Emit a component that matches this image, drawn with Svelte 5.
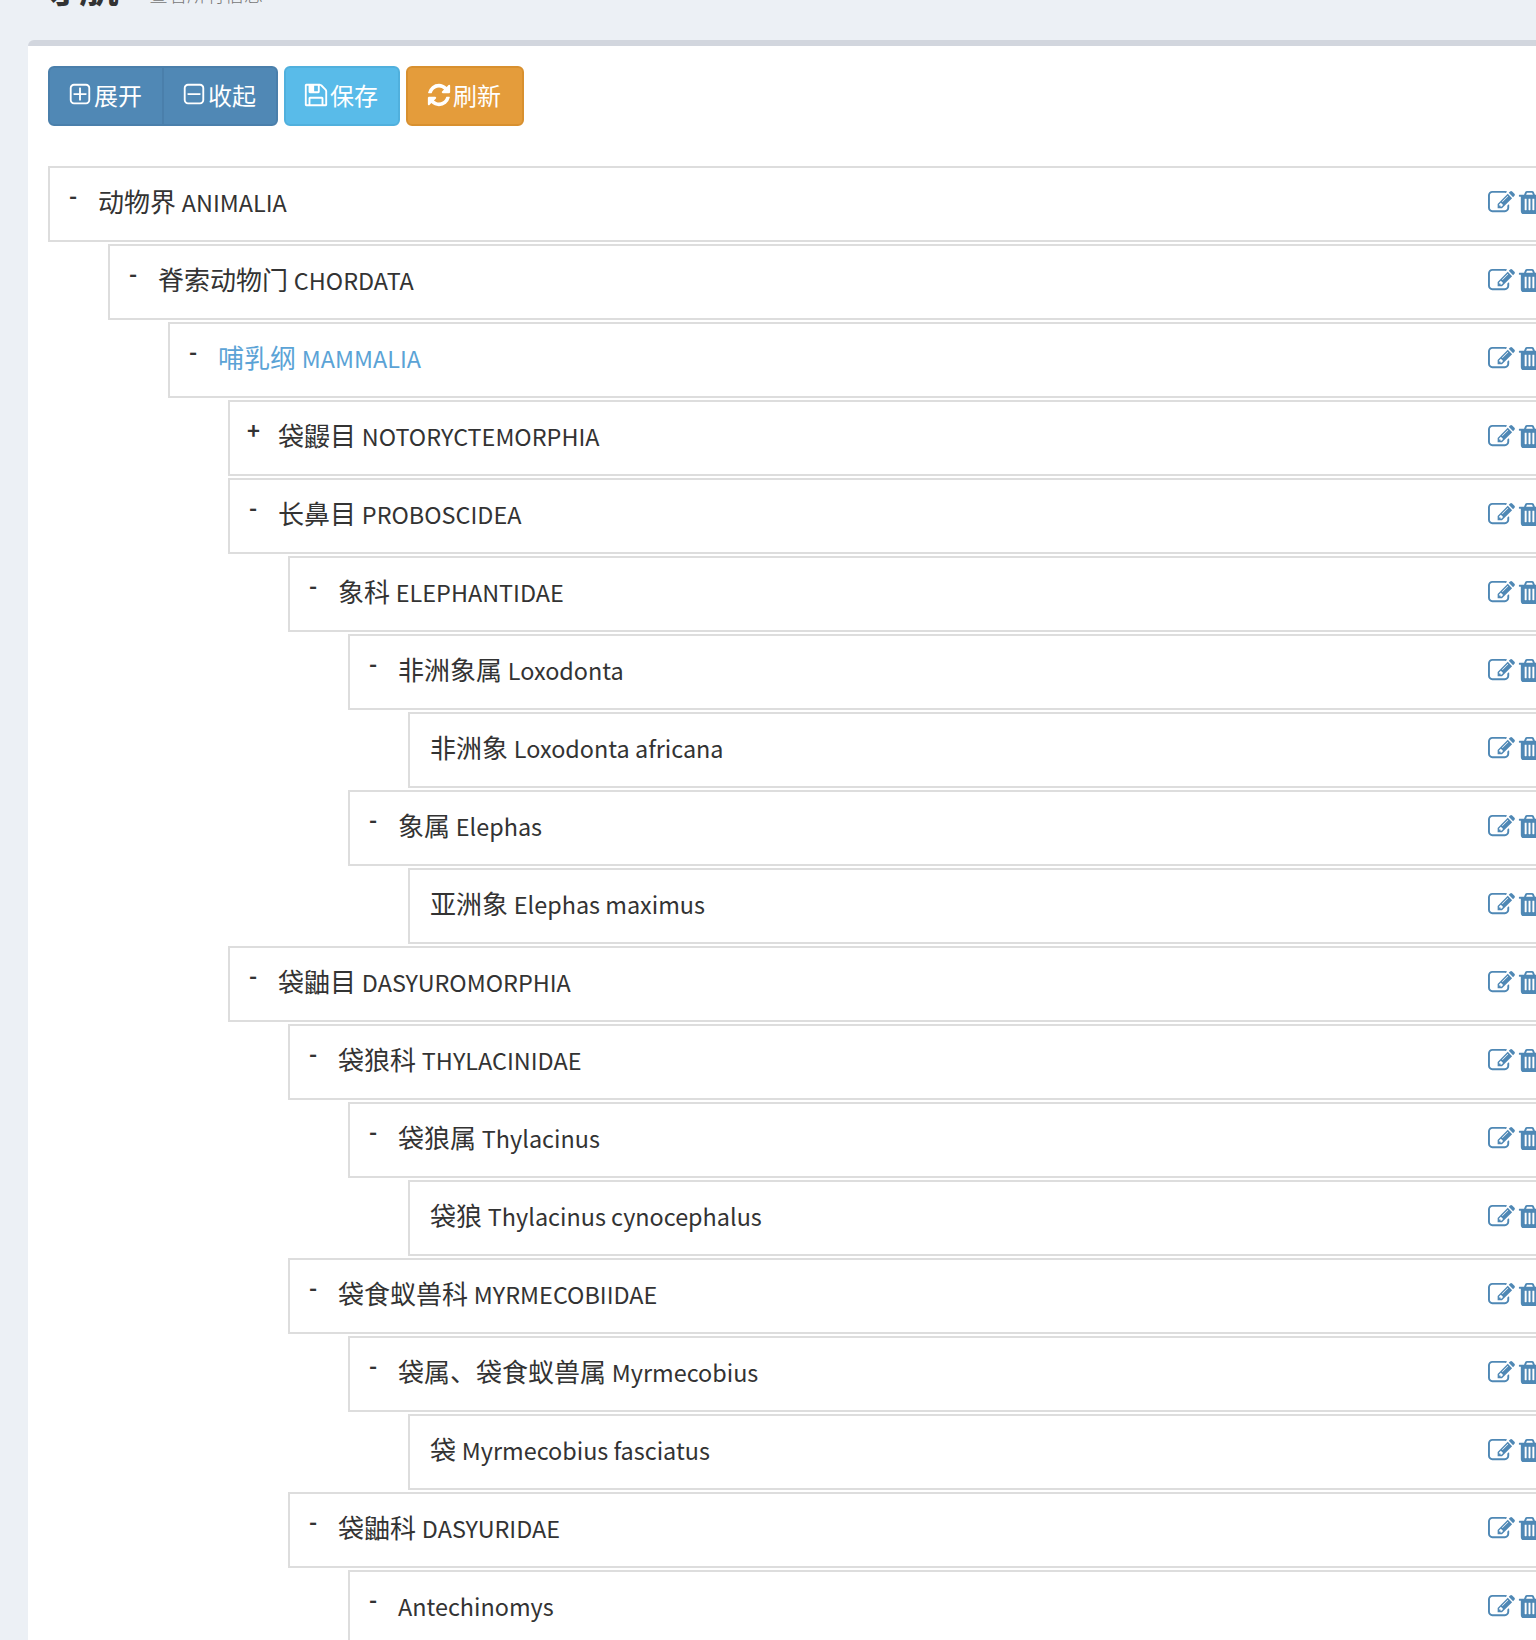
<script>
  const tree = [
    { name: '动物界', latin: 'ANIMALIA', open: true, children: [
      { name: '脊索动物门', latin: 'CHORDATA', open: true, children: [
        { name: '哺乳纲', latin: 'MAMMALIA', open: true, active: true, children: [
          { name: '袋鼹目', latin: 'NOTORYCTEMORPHIA', open: false, children: [] },
          { name: '长鼻目', latin: 'PROBOSCIDEA', open: true, children: [
            { name: '象科', latin: 'ELEPHANTIDAE', open: true, children: [
              { name: '非洲象属', latin: 'Loxodonta', open: true, children: [
                { name: '非洲象', latin: 'Loxodonta africana', leaf: true }
              ] },
              { name: '象属', latin: 'Elephas', open: true, children: [
                { name: '亚洲象', latin: 'Elephas maximus', leaf: true }
              ] }
            ] }
          ] },
          { name: '袋鼬目', latin: 'DASYUROMORPHIA', open: true, children: [
            { name: '袋狼科', latin: 'THYLACINIDAE', open: true, children: [
              { name: '袋狼属', latin: 'Thylacinus', open: true, children: [
                { name: '袋狼', latin: 'Thylacinus cynocephalus', leaf: true }
              ] }
            ] },
            { name: '袋食蚁兽科', latin: 'MYRMECOBIIDAE', open: true, children: [
              { name: '袋属、袋食蚁兽属', latin: 'Myrmecobius', open: true, children: [
                { name: '袋', latin: 'Myrmecobius fasciatus', leaf: true }
              ] }
            ] },
            { name: '袋鼬科', latin: 'DASYURIDAE', open: true, children: [
              { name: '', latin: 'Antechinomys', open: true, children: [] }
            ] }
          ] }
        ] }
      ] }
    ] }
  ];
</script>

{#snippet nodes(items)}
  <ol class="list">
    {#each items as item}
      <li>
        <div class="row">
          {#if !item.leaf}
            <span class="toggle" class:plus={!item.open}>{item.open ? '-' : '+'}</span>
          {/if}
          <span class="name" class:active={item.active}>{item.name}{#if item.name}{' '}{/if}<span class="latin">{item.latin}</span></span>
          <span class="actions">
            <svg class="ic-edit" viewBox="0 0 1792 1792"><path d="M888 1184l116-116-152-152-116 116v56h96v96h56zm440-720q-16-16-33 1l-350 350q-17 17-1 33t33-1l350-350q17-17 1-33zm80 594v190q0 119-84.500 203.500t-203.500 84.500h-832q-119 0-203.500-84.500t-84.500-203.500v-832q0-119 84.500-203.500t203.500-84.500h832q63 0 117 25 15 7 18 23 3 17-9 29l-49 49q-14 14-32 8-23-6-45-6h-832q-66 0-113 47t-47 113v832q0 66 47 113t113 47h832q66 0 113-47t47-113v-126q0-13 9-22l64-64q15-15 35-7t20 29zm-96-738l288 288-672 672h-288v-288zm444 132l-92 92-288-288 92-92q28-28 68-28t68 28l152 152q28 28 28 68t-28 68z"/></svg>
            <svg class="ic-trash" viewBox="0 0 1792 1792"><path d="M704 1376v-704q0-14-9-23t-23-9h-64q-14 0-23 9t-9 23v704q0 14 9 23t23 9h64q14 0 23-9t9-23zm256 0v-704q0-14-9-23t-23-9h-64q-14 0-23 9t-9 23v704q0 14 9 23t23 9h64q14 0 23-9t9-23zm256 0v-704q0-14-9-23t-23-9h-64q-14 0-23 9t-9 23v704q0 14 9 23t23 9h64q14 0 23-9t9-23zm-544-992h448l-48-117q-7-9-17-11h-317q-10 2-17 11zm928 32v64q0 14-9 23t-23 9h-96v948q0 83-47 143.500t-113 60.500h-832q-66 0-113-58.500t-47-141.500v-952h-96q-14 0-23-9t-9-23v-64q0-14 9-23t23-9h309l70-167q15-37 54-63t79-26h320q40 0 79 26t54 63l70 167h309q14 0 23 9t9 23z"/></svg>
          </span>
        </div>
        {#if item.children && item.children.length}
          {@render nodes(item.children)}
        {/if}
      </li>
    {/each}
  </ol>
{/snippet}

<div class="page">
  <header class="head">
    <h1>导航</h1>
    <small>查看所有信息</small>
  </header>
  <section class="box">
    <div class="toolbar">
      <div class="group">
        <button class="btn primary">
          <svg viewBox="0 0 1792 1792"><path d="M1344 800v64q0 14-9 23t-23 9h-352v352q0 14-9 23t-23 9h-64q-14 0-23-9t-9-23v-352h-352q-14 0-23-9t-9-23v-64q0-14 9-23t23-9h352v-352q0-14 9-23t23-9h64q14 0 23 9t9 23v352h352q14 0 23 9t9 23zm128 448v-832q0-66-47-113t-113-47h-832q-66 0-113 47t-47 113v832q0 66 47 113t113 47h832q66 0 113-47t47-113zm128-832v832q0 119-84.500 203.500t-203.500 84.500h-832q-119 0-203.500-84.500t-84.500-203.500v-832q0-119 84.500-203.500t203.500-84.500h832q119 0 203.500 84.500t84.500 203.500z"/></svg>展开
        </button>
        <button class="btn primary">
          <svg viewBox="0 0 1792 1792"><path d="M1344 800v64q0 14-9 23t-23 9h-832q-14 0-23-9t-9-23v-64q0-14 9-23t23-9h832q14 0 23 9t9 23zm128 448v-832q0-66-47-113t-113-47h-832q-66 0-113 47t-47 113v832q0 66 47 113t113 47h832q66 0 113-47t47-113zm128-832v832q0 119-84.500 203.500t-203.500 84.500h-832q-119 0-203.500-84.500t-84.500-203.500v-832q0-119 84.500-203.500t203.500-84.500h832q119 0 203.500 84.500t84.500 203.500z"/></svg>收起
        </button>
      </div>
      <button class="btn info">
        <svg viewBox="0 0 1792 1792"><path d="M512 1536h768v-384h-768v384zm896 0h128v-896q0-14-10-38.500t-20-34.500l-281-281q-10-10-34-20t-39-10v416q0 40-28 68t-68 28h-576q-40 0-68-28t-28-68v-416h-128v1280h128v-416q0-40 28-68t68-28h832q40 0 68 28t28 68v416zm-384-928v-320q0-13-9.500-22.500t-22.500-9.500h-192q-13 0-22.500 9.500t-9.500 22.500v320q0 13 9.500 22.500t22.500 9.500h192q13 0 22.500-9.500t9.500-22.500zm640 32v928q0 40-28 68t-68 28h-1344q-40 0-68-28t-28-68v-1344q0-40 28-68t68-28h928q40 0 88 20t76 48l280 280q28 28 48 76t20 88z"/></svg>保存
      </button>
      <button class="btn warning">
        <svg viewBox="0 0 1792 1792"><path d="M1639 1056q0 5-1 7-64 268-268 434.500t-478 166.500q-146 0-282.500-55t-243.500-157l-129 129q-19 19-45 19t-45-19-19-45v-448q0-26 19-45t45-19h448q26 0 45 19t19 45-19 45l-137 137q71 66 161 102t187 36q134 0 250-65t186-179q11-17 53-117 8-23 30-23h192q13 0 22.500 9.500t9.500 22.500zm25-800v448q0 26-19 45t-45 19h-448q-26 0-45-19t-19-45 19-45l138-138q-148-137-349-137-134 0-250 65t-186 179q-11 17-53 117-8 23-30 23h-199q-13 0-22.500-9.500t-9.500-22.500v-7q65-268 270-434.500t480-166.500q146 0 284 55.500t245 156.500l130-129q19-19 45-19t45 19 19 45z"/></svg>刷新
      </button>
    </div>
    <div class="tree">
      {@render nodes(tree)}
    </div>
  </section>
</div>

<style>
  :global(html), :global(body) {
    margin: 0;
    height: 1640px;
    overflow: hidden;
  }
  .page {
    height: 1640px;
    overflow: hidden;
    background: #ecf0f5;
    font-family: "Noto Sans CJK SC", "Noto Sans", sans-serif;
    color: #333;
    padding-left: 28px;
    box-sizing: border-box;
  }
  .head {
    display: flex;
    align-items: baseline;
    height: 40px;
    margin-top: -35px;
    padding-left: 11px;
    gap: 30px;
  }
  h1 {
    margin: 0;
    font-size: 40px;
    line-height: 40px;
    font-weight: 700;
    color: #333;
  }
  small {
    font-size: 19px;
    line-height: 40px;
    color: #777;
    font-weight: 300;
  }
  .box {
    width: 1557px;
    margin-top: 35px;
    box-sizing: border-box;
    background: #fff;
    border-top: 6px solid #d2d6de;
    border-radius: 6px 6px 0 0;
    padding: 20px;
  }
  .toolbar {
    display: flex;
    gap: 6px;
    margin-bottom: 40px;
  }
  .group {
    display: flex;
  }
  .btn {
    display: flex;
    align-items: center;
    justify-content: center;
    gap: 1px;
    height: 60px;
    padding: 0 3px 4px 0;
    border: 2px solid;
    border-radius: 6px;
    color: #fff;
    font: inherit;
    font-size: 24px;
    box-sizing: border-box;
  }
  .btn svg {
    width: 26px;
    height: 26px;
    margin-top: 2px;
    fill: #fff;
  }
  .group .btn {
    width: 115px;
  }
  .group .btn:first-child {
    border-radius: 6px 0 0 6px;
    border-right-width: 1px;
  }
  .group .btn:last-child {
    border-radius: 0 6px 6px 0;
    border-left-width: 1px;
  }
  .primary {
    background: #5088b5;
    border-color: #4a7fab;
  }
  .info {
    width: 116px;
    background: #59bbe9;
    border-color: #50b0dd;
  }
  .warning {
    width: 118px;
    background: #e49c3b;
    border-color: #d8902f;
  }
  .list {
    list-style: none;
    margin: 0;
    padding: 0;
  }
  .list .list {
    padding-left: 60px;
  }
  .row {
    display: flex;
    align-items: center;
    height: 76px;
    margin-bottom: 2px;
    padding: 0 20px;
    border: 2px solid #ddd;
    box-sizing: border-box;
    font-size: 26px;
    line-height: 36px;
  }
  .toggle {
    width: 29px;
    margin-left: -1px;
    flex: none;
    font-weight: 700;
    font-size: 22px;
    line-height: 20px;
    margin-top: -20px;
    color: #333;
  }
  .toggle.plus {
    width: 31px;
    margin-left: -3px;
    margin-top: -18px;
  }
  .name {
    margin-top: -6px;
  }
  .latin {
    font-size: 23.4px;
  }
  .name.active {
    color: #5ba3d6;
  }
  .actions {
    margin-left: auto;
    display: flex;
    align-items: center;
    margin-top: -4px;
  }
  .actions svg {
    width: 27px;
    height: 27px;
    fill: #4f88b5;
  }
  .ic-trash {
    margin-left: 1px;
  }
</style>
